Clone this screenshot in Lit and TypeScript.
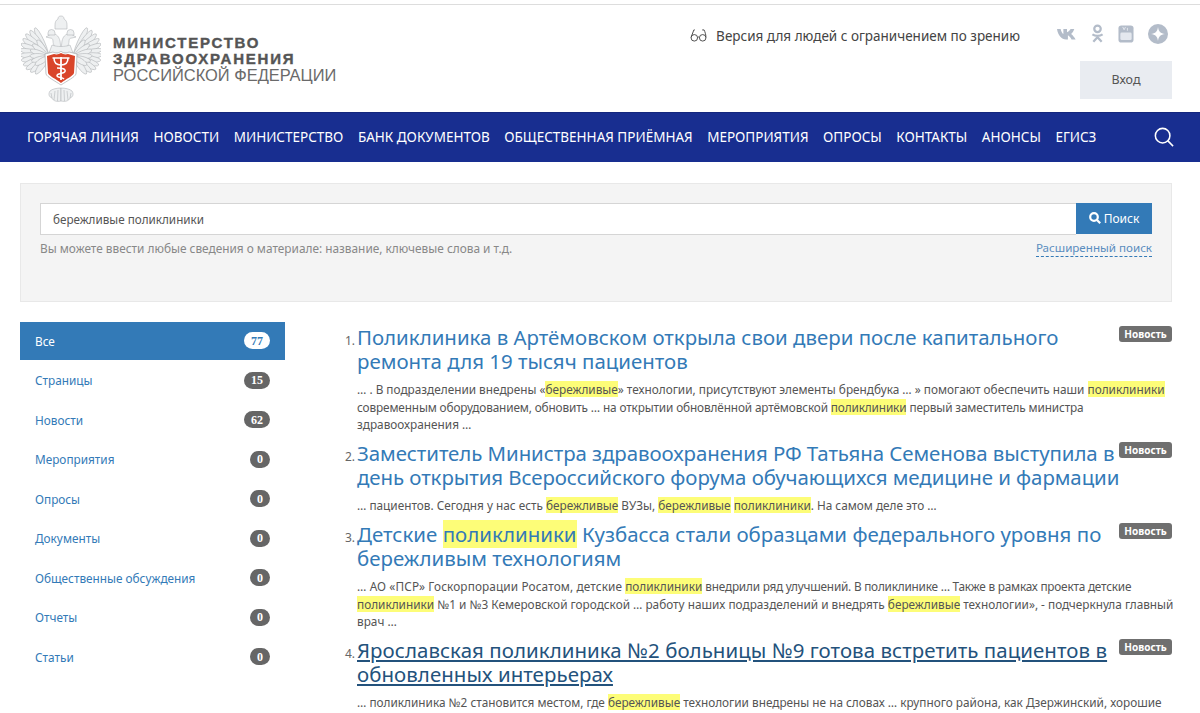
import { LitElement, html, css, svg } from "lit";
import { customElement } from "lit/decorators.js";

const NAV = ["ГОРЯЧАЯ ЛИНИЯ","НОВОСТИ","МИНИСТЕРСТВО","БАНК ДОКУМЕНТОВ","ОБЩЕСТВЕННАЯ ПРИЁМНАЯ","МЕРОПРИЯТИЯ","ОПРОСЫ","КОНТАКТЫ","АНОНСЫ","ЕГИСЗ"];
const SIDE: [string, number][] = [["Все",77],["Страницы",15],["Новости",62],["Мероприятия",0],["Опросы",0],["Документы",0],["Общественные обсуждения",0],["Отчеты",0],["Статьи",0]];
const M = (s: string) => html`<mark>${s}</mark>`;
const B = M("бережливые"), P = M("поликлиники");

// one half of the emblem, mirrored for the other side: a fan of feathers [angle, length, half-width]
const FEATHERS: [number, number, number][] = [
  [-24, 32, 3], [-34, 32, 3.2], [-44, 32, 3.2], [-54, 31, 3.2], [-64, 30, 3.2], [-75, 29, 3.2], [-86, 28, 3.2],
  [-97, 27, 3.2], [-108, 26, 3.1], [-119, 25, 3], [-131, 23, 2.9], [-144, 21, 2.8],
  [-32, 20, 2.8], [-50, 20, 2.8], [-68, 19, 2.8], [-86, 18, 2.8], [-104, 17, 2.6], [-122, 15, 2.6],
];
const half = svg`
  ${FEATHERS.map(([a, l, w]) => svg`<ellipse cx="0" cy="${-l / 2}" rx="${w}" ry="${l / 2}" transform="translate(27 42) rotate(${a})"/>`)}
  <path d="M38 34c-4-1-6-4-6-8 0-2-1-3-3-3l-4-1c2-1 4-3 7-3 4 0 6 3 7 7l1 8z"/>
  <path d="M27 18a3.500 3.500 0 0 1 7 0v2h-7z"/>
  <path d="M40 73c-4 0-9 1-11 3-2 3-1 6 2 7 1 3 5 4 9 3z"/>
  <path d="M34 76l-1 9M37 75l-.5 11M30 78l1 5" fill="none"/>
`;
const eagle = svg`
  <g fill="#eef0f1" stroke="#b4b7ba" stroke-width=".6">
    ${half}
    <g transform="translate(80 0) scale(-1 1)">${half}</g>
    <path d="M40 1c2 0 3 1 3 3 2 1 3 3 3 6v4H34v-4c0-3 1-5 3-6 0-2 1-3 3-3z"/>
    <path d="M31 30c5 2 13 2 18 0l3 8H28z"/>
  </g>
  <path d="M24 39l8-2c4 2 6 1 8-1 2 2 4 3 8 1l8 2-1 20c-1 3-9 7-15 11-6-4-14-8-15-11z" fill="#fff" stroke="#a9acaf" stroke-width=".7"/>
  <path d="M26 41l7-2c3 1 5 0 7-1 2 1 4 2 7 1l7 2-1 17c-1 3-8 6-13 10-5-4-12-7-13-10z" fill="#d9452a"/>
  <path d="M40 42v23" stroke="#fff" stroke-width="1.800" fill="none"/>
  <path d="M33 43c0 5 3 7 7 7s7-2 7-7M31.500 43h17" stroke="#fff" stroke-width="1.600" fill="none"/>
  <path d="M36 53c5 0 9 1 8 3.500s-8 1.500-8 4 5 1.500 7 3.500" stroke="#fff" stroke-width="1.500" fill="none"/>
`;

@customElement("app-root")
export class AppRoot extends LitElement {
  static styles = css`
    :host { display:block; height:713px; overflow:hidden; background:#fff; font-family:"Noto Sans","Open Sans",sans-serif; color:#555; }
    * { box-sizing:border-box; }
    .top { margin-top:4px; height:108px; border-top:1px solid #ddd; display:flex; justify-content:space-between; padding:0 28px 0 21px; }
    .logo { display:flex; align-items:flex-start; gap:12px; padding-top:10px; }
    .logo svg { display:block; }
    .ltext { margin-top:19.5px; font-family:"Liberation Sans",sans-serif; color:#555; }
    .ltext b { display:block; font-size:15px; line-height:16px; font-weight:700; letter-spacing:1.78px; -webkit-text-stroke:.4px #555; }
    .ltext span { display:block; font-size:16.45px; line-height:17px; color:#6a6a6a; }
    .tr { display:flex; flex-direction:column; align-items:flex-end; }
    .trow { display:flex; align-items:center; height:56px; padding-top:5px; }
    .vi { display:flex; align-items:center; gap:9px; font-size:13.5px; color:#444; }
    .soc { display:flex; gap:14px; align-items:center; margin:0 4px 4px 37px; }
    .enter { width:92px; height:38px; padding-bottom:2px; background:#e9ecf1; display:flex; align-items:center; justify-content:center; font-size:12.5px; color:#555; }
    nav { height:50px; background:#182e90; border-top:1px solid #14277e; display:flex; align-items:center; padding:0 26px 2px 27px; color:#fff; font-size:13.5px; justify-content:space-between; }
    nav .links { display:flex; gap:14.5px; }
    .panel { margin:21px 28px 0 20px; height:119px; background:#f4f4f4; border:1px solid #e8e8e8; padding:19px 19px 0 19px; }
    .sf { display:flex; height:32px; }
    .inp { flex:1; height:32px; background:#fff; border:1px solid #d5d5d5; border-right:0; padding:0 12px 1px; display:flex; align-items:center; font-size:11.7px; color:#555; }
    .btn { width:76px; height:31px; padding-bottom:1px; background:#337ab7; color:#fff; font-size:12px; display:flex; align-items:center; justify-content:center; gap:3px; }
    .hint { display:flex; justify-content:space-between; font-size:11.85px; color:#888; margin-top:4px; line-height:18px; }
    .hint a { color:#5a8dbf; font-size:11.6px; border-bottom:1px dashed #337ab7; line-height:17px; }
    .main { display:flex; margin:20px 28px 0 20px; }
    aside { width:265px; flex:none; }
    .it { height:39.5px; display:flex; align-items:center; justify-content:space-between; padding:0 15px 1px; color:#337ab7; font-size:11.8px; }
    .it:first-child { height:38px; background:#337ab7; color:#fff; margin-bottom:1px; }
    .bd { background:#666; color:#fff; font-size:12px; font-weight:700; border-radius:10px; height:17px; min-width:20px; padding:0 7px; display:flex; align-items:center; justify-content:center; line-height:1; font-family:"Liberation Serif",serif; }
    .it:first-child .bd { background:#fff; color:#337ab7; }
    .res { flex:1; margin-left:55px; margin-top:3px; display:flex; flex-direction:column; gap:7.5px; min-width:0; }
    .r { display:block; position:relative; padding-left:17px; }
    .n { position:absolute; left:0; top:7px; font-size:12px; color:#666; width:15px; text-align:right; }
    .t { font-size:20.45px; line-height:24px; color:#337ab7; white-space:nowrap; }
    .t.u { color:#23527c; text-decoration:underline; }
    .t2 { letter-spacing:-.07px; }
    .t3 { letter-spacing:.03px; }
    .t4 { letter-spacing:.06px; }
    .tag { position:absolute; right:0; top:1px; background:#6f6f6f; color:#fff; font-size:10px; font-weight:700; border-radius:3px; height:16px; width:53px; display:flex; align-items:center; justify-content:center; }
    .s { font-size:11.8px; line-height:17.5px; color:#555; margin-top:8px; white-space:nowrap; }
    .tight { letter-spacing:-.13px; }
    .loose { letter-spacing:.12px; }
    .tighter { letter-spacing:-.22px; }
    mark { background:#fdfd78; color:inherit; }
  `;

  row(i: number, title: unknown, snip: unknown, cls = "") {
    return html`<div class="r"><span class="n">${i}.</span><span class="tag">Новость</span>
      <div class="t ${cls}">${title}</div><div class="s">${snip}</div></div>`;
  }

  render() {
    return html`
      <div class="top">
        <div class="logo">
          <svg width="80" height="88" viewBox="0 0 80 88">${eagle}</svg>
          <div class="ltext"><b>МИНИСТЕРСТВО</b><b>ЗДРАВООХРАНЕНИЯ</b><span>РОССИЙСКОЙ ФЕДЕРАЦИИ</span></div>
        </div>
        <div class="tr">
          <div class="trow">
            <div class="vi">
              <svg width="17" height="13" viewBox="0 0 18 14" fill="none" stroke="#444" stroke-width="1"><circle cx="4.500" cy="9.500" r="3.500"/><circle cx="13.500" cy="9.500" r="3.500"/><path d="M8 9c.5-.6 1.500-.6 2 0M1 9L4 1h1M17 9c0-3-1-6-2-8h-2"/></svg>
              Версия для людей с ограничением по зрению
            </div>
            <div class="soc">
              <svg width="20" height="12" viewBox="0 0 22 13" fill="#b3bcc9"><path d="M0 1h4c.5 3 2 5 3 5.500V1h4v3.500C12.500 4 14 2.500 15 1h4c-.5 2-2 4-3.500 5.500 2 1.500 3.500 3.500 5 6h-4.500c-1-2-2.500-3.500-4-4.500v4.500h-2C5 12.500 1 8 0 1z"/></svg>
              <svg width="13" height="19" viewBox="0 0 14 20" fill="none" stroke="#b3bcc9" stroke-width="2.400"><circle cx="7" cy="5" r="3.500"/><path d="M1.500 11c3 2 8 2 11 0M7 13v1M2.500 19L7 14l4.500 5"/></svg>
              <svg width="16" height="18" viewBox="0 0 17 19"><rect x=".5" y=".5" width="16" height="18" rx="3" fill="#b3bcc9"/><rect x="2.500" y="8" width="12" height="8" rx="1.500" fill="#e4e8ee"/><path d="M5 2l1.500 3L8 2M10 3v3" stroke="#e4e8ee" fill="none"/></svg>
              <svg width="20" height="20" viewBox="0 0 20 20"><circle cx="10" cy="10" r="10" fill="#b3bcc9"/><path d="M10 3c.6 4.500 2.500 6.400 7 7-4.500.6-6.400 2.500-7 7-.6-4.500-2.500-6.400-7-7 4.500-.6 6.400-2.500 7-7z" fill="#fff"/></svg>
            </div>
          </div>
          <div class="enter">Вход</div>
        </div>
      </div>
      <nav>
        <div class="links">${NAV.map((n) => html`<span>${n}</span>`)}</div>
        <svg width="20" height="20" viewBox="0 0 22 22" fill="none" stroke="#fff" stroke-width="1.700"><circle cx="9.500" cy="9.500" r="8"/><path d="M15 15l6 6"/></svg>
      </nav>
      <div class="panel">
        <div class="sf">
          <div class="inp">бережливые поликлиники</div>
          <div class="btn"><svg width="12" height="12" viewBox="0 0 12 12" fill="none" stroke="#fff" stroke-width="2.200"><circle cx="5" cy="5" r="3.800"/><path d="M8 8l3.200 3.200"/></svg>Поиск</div>
        </div>
        <div class="hint"><span>Вы можете ввести любые сведения о материале: название, ключевые слова и т.д.</span><a>Расширенный поиск</a></div>
      </div>
      <div class="main">
        <aside>${SIDE.map(([l, c]) => html`<div class="it"><span>${l}</span><span class="bd">${c}</span></div>`)}</aside>
        <div class="res">
          ${this.row(1, html`Поликлиника в Артёмовском открыла свои двери после капитального<br>ремонта для 19 тысяч пациентов`,
            html`… . В подразделении внедрены «${B}» технологии, присутствуют элементы брендбука … » помогают обеспечить наши ${P}<br><span class="tight">современным оборудованием, обновить … на открытии обновлённой артёмовской ${P} первый заместитель министра</span><br>здравоохранения …`)}
          ${this.row(2, html`Заместитель Министра здравоохранения РФ Татьяна Семенова выступила в<br>день открытия Всероссийского форума обучающихся медицине и фармации`,
            html`… пациентов. Сегодня у нас есть ${B} ВУЗы, ${B} ${P}. На самом деле это …`, "t2")}
          ${this.row(3, html`Детские ${P} Кузбасса стали образцами федерального уровня по<br>бережливым технологиям`,
            html`<span class="loose">… АО «ПСР» Госкорпорации Росатом, детские</span> ${P} <span class="tighter">внедрили ряд улучшений. В поликлинике … Также в рамках проекта детские</span><br>${P} №1 и №3 Кемеровской городской … работу наших подразделений и внедрять ${B} технологии», - подчеркнула главный<br>врач …`, "t3")}
          ${this.row(4, html`Ярославская поликлиника №2 больницы №9 готова встретить пациентов в<br>обновленных интерьерах`,
            html`… поликлиника №2 становится местом, где ${B} технологии внедрены не на словах … крупного района, как Дзержинский, хорошие`, "u t4")}
        </div>
      </div>
    `;
  }
}
